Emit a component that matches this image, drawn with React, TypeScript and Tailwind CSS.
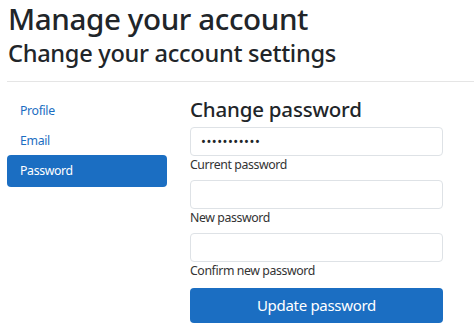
import React from "react";

export default function App() {
  const font = { fontFamily: '"Noto Sans", "Open Sans", sans-serif' };
  return (
    <div className="w-[474px] h-[335px] bg-white overflow-hidden text-[#212529]" style={font}>
      <div className="pl-[8px] pt-[1px]">
        <h1 className="text-[29.6px] leading-[36px] font-medium tracking-[-0.4px]">Manage your account</h1>
        <h2 className="text-[23.6px] leading-[30px] mt-[1px] font-medium tracking-[-0.3px]">Change your account settings</h2>
      </div>
      <div className="ml-[7px] mt-[13px] h-px bg-[#e5e5e5]" />
      <div className="flex pl-[7px] mt-[13px]">
        <nav className="w-[160px] flex flex-col text-[12.3px] tracking-[-0.35px]">
          <a className="h-[30px] flex items-center px-[13px] pt-[2px] text-[#1b6ec2]">Profile</a>
          <a className="h-[30px] flex items-center px-[13px] pt-[2px] text-[#1b6ec2]">Email</a>
          <a className="h-[32px] flex items-center px-[13px] text-white bg-[#1b6ec2] rounded-[4px]">Password</a>
        </nav>
        <div className="ml-[23px] w-[253px]">
          <h3 className="text-[20.5px] leading-[26px] mt-[1px] font-medium tracking-[-0.2px]">Change password</h3>
          <div className="mt-[5px] h-[29px] border border-[#dee2e6] rounded-[4px] flex items-center px-[10px] text-[13px] tracking-[0.5px]">
            •••••••••••
          </div>
          <div className="text-[12.3px] leading-[18px] tracking-[-0.4px] text-[#333]">Current password</div>
          <div className="mt-[6px] h-[29px] border border-[#dee2e6] rounded-[4px]" />
          <div className="text-[12.3px] leading-[18px] tracking-[-0.4px] text-[#333]">New password</div>
          <div className="mt-[6px] h-[29px] border border-[#dee2e6] rounded-[4px]" />
          <div className="text-[12.3px] leading-[18px] tracking-[-0.4px] text-[#333]">Confirm new password</div>
          <button className="mt-[8px] w-full h-[35px] bg-[#1b6ec2] text-white rounded-[4px] text-[15px] tracking-[-0.3px]">
            Update password
          </button>
        </div>
      </div>
    </div>
  );
}
